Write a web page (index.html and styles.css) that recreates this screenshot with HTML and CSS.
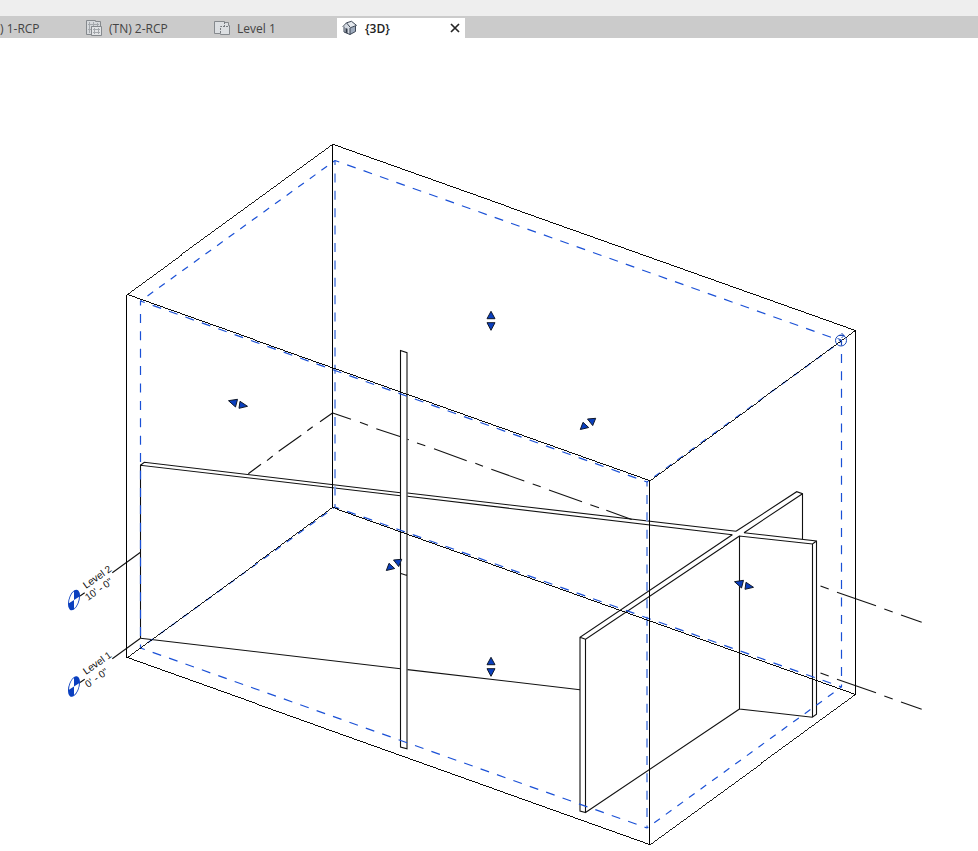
FILE: index.html
```html
<!DOCTYPE html>
<html lang="en">
<head>
<meta charset="utf-8">
<title>{3D}</title>
<link rel="stylesheet" href="styles.css">
</head>
<body>
<div class="ribbon-edge"></div>
<nav class="tabs" aria-label="Views">
  <button class="tab tab-clipped" type="button"><span>) 1-RCP</span></button>
  <button class="tab" type="button">
    <svg class="icon" viewBox="0 0 16 16" aria-hidden="true"><path d="M.5 .5h9v1h5v5h-9v8h-5z" fill="#d6d9dc" stroke="#85898d"/><path d="M3.500 2v11M7.500 2v4M11.500 3v3M2 4.500h11M2 9.500h3" stroke="#a4a8ac"/><path d="M5.500 6.500h10v9h-10z" fill="#e2e4e6" stroke="#85898d"/><path d="M8.500 8v6M12.500 8v6M7 9.500h7M7 12.500h7" stroke="#a4a8ac"/></svg>
    <span>(TN) 2-RCP</span>
  </button>
  <button class="tab" type="button">
    <svg class="icon" viewBox="0 0 16 16" aria-hidden="true"><path d="M.5 1.500h10v1h4v3h1v9h-9v-1h-6z" fill="#dcdfe2" stroke="#85898d"/><path d="M6.500 13V6.500h9M10.500 2v4" fill="none" stroke="#777b80" stroke-dasharray="2 1"/></svg>
    <span>Level 1</span>
  </button>
  <div class="tab tab-active">
    <button class="tab-name" type="button">
      <svg class="icon" viewBox="0 0 16 16" aria-hidden="true"><path d="M2 6.500L4.500 3.500 8 8v6.500L2 12z" fill="#d3d9e2"/><path d="M8 8v6.500l5.500-3V6z" fill="#9eabbd"/><path d="M4.500 2.800L9.500 1.300 14.500 5.300 8.500 7.500z" fill="#e6eaef"/><path d="M.7 6.800L4.500 2.800l4 4.900 6-2.300-5-4.100-5 1.500M2 6.500V12l6 2.500 5.500-3V6M8 8v6.500" fill="none" stroke="#3d4756"/><path d="M3.500 8v4.500l2 .8V8.800z" fill="#303947"/></svg>
      <span>{3D}</span>
    </button>
    <button class="close" type="button" aria-label="Close view"><svg viewBox="0 0 10 10" aria-hidden="true"><path d="M1 1l8 8M9 1l-8 8" stroke="#262626" stroke-width="1.700"/></svg></button>
  </div>
</nav>
<main>
<svg class="canvas" viewBox="0 38 978 813" role="img" aria-label="3D view">
  <defs>
    <path id="updown" d="M491 311.300l4 7.400h-8zM487 322.700h8l-4 7.600z"/>
    <path id="sideways" d="M228.500 400.700l9-1.400-2 7.700zM240 401.300l7.500 5-8.500 2z"/>
    <path id="depth" d="M580.300 429.500l2.700-7.200 5.700 5.200zM587.500 419l8.200-.7-3 7.300z"/>
    <g id="levelhead">
      <ellipse rx="5.500" ry="9" fill="#fff" stroke="#0a3fbf"/>
      <path d="M0 0V-9A5.500 9 0 0 1 5.500 0zM0 0V9A5.500 9 0 0 1 -5.500 0z" fill="#0a3fbf"/>
    </g>
  </defs>

  <!-- level lines -->
  <g class="model">
    <path d="M332.500 413l-12.500 8.700M312.700 426.700l-5.400 4M301.300 435.300l-22.600 16M272.700 456l-5.700 4.700M261 464.300L248.300 473.700"/>
    <path d="M332.700 413l18.300 6.300M360 422.300l8 3M376.300 428.700l24.400 8M407.500 439.300l1.300.4M417 443l8.300 2.700M434 448.700l32.700 12M475.300 463.300l7.700 3M491.300 469.300l33 11.700M532.700 484l8 2.700M549 490l33 11.700M590.300 504.700l8.700 3M606.300 510.300l25.400 9.300"/>
    <path id="levelend" d="M820.500 673l8.200 3M837 679.300l39 13.400M884.300 696l8.400 3M901 702l20.700 7.300"/>
    <use href="#levelend" y="-87"/>
    <path d="M80 596l4.700-3.300M112.300 572.700l28.200-20.400M80 682.500l4.700-3.300M112.300 658.700l28.200-20.400"/>
  </g>

  <!-- walls -->
  <g class="model">
    <path d="M140.500 638.300V465.300L400.500 495.700M140.500 465.300l3.800-3L400.500 492.700M407.500 493L736 531.300M407.500 496.300L732.300 534.700"/>
    <path d="M140.500 638.300L400.500 668.700M407.500 669.600L580 689.700"/>
    <path d="M400.500 747V350.500l6.500 2.200V748.700zM401 573.500l6 2"/>
    <path d="M736 531.300L796.700 491.700l5.800 2V539.500M744 532.700L802.500 493.700M744 532.700L816.500 541V714.300l-4.200 3L739.500 709V536L812.500 544l4-3M812.500 544V717"/>
    <path d="M732.300 534.700L580 637.300V811l5.500 1.500V639.300L739.500 536M580 637.300l5.500 2M585.500 812.500L739.500 709"/>
  </g>

  <!-- crop region -->
  <g class="crop">
    <path d="M335 160.500V507M647 482V828" class="wide"/>
    <path d="M140.500 301V648M841.500 341V687"/>
    <path d="M335 160.500L841.500 341M140.500 301L647 482M335 507L841.500 687M140.500 648L647 828"/>
    <path class="short" d="M335 160.500L140.500 301M841.500 341L647 482M335 507L140.500 648M841.500 687L647 828"/>
  </g>

  <!-- section box -->
  <g class="box">
    <path d="M126.500 294.500V657.500M332.500 144.500V507.500M649.500 480.500V844.500M855.500 330.500V694.500"/>
    <path class="long" d="M332.500 144.500L855.500 330.500M126.500 294.500L649.500 480.500M332.500 507.500L855.500 694.500M126.500 657.500L649.500 844.500"/>
    <path class="steep" d="M126.500 294.500L332.500 144.500M649.500 480.500L855.500 330.500M126.500 657.500L332.500 507.500M649.500 844.500L855.500 694.500"/>
  </g>

  <g class="handles">
    <use href="#updown"/><use href="#updown" y="346"/>
    <use href="#sideways"/><use href="#sideways" x="506" y="181"/>
    <use href="#depth"/><use href="#depth" x="-194" y="141"/>
  </g>
  <g class="rotate"><circle cx="841" cy="340.500" r="5.500"/><path d="M841.500 345v-5l-4-1.500M839 335.500h5M841.500 333l2.500 2.500-2.500 2.500"/></g>

  <!-- level tags lie in the plane of the section box -->
  <use href="#levelhead" transform="translate(74 600) skewY(-33)"/>
  <use href="#levelhead" transform="translate(74 686.500) skewY(-33)"/>
  <g class="leveltext">
    <text transform="translate(86 589) rotate(-35)">Level 2</text>
    <text transform="translate(88 601) rotate(-35)">10' - 0"</text>
    <text transform="translate(86 675) rotate(-35)">Level 1</text>
    <text transform="translate(88 688) rotate(-35)">0' - 0"</text>
  </g>
</svg>
</main>
</body>
</html>
```
FILE: styles.css
```css
* { box-sizing: border-box; }

body {
  margin: 0;
  background: #fff;
  font-family: "Open Sans", "Noto Sans", sans-serif;
}

.ribbon-edge {
  height: 16px;
  background: #eeeeee;
}

.tabs {
  display: flex;
  align-items: flex-end;
  height: 22px;
  padding-top: 2px;
  background: #cbcbcb;
  overflow: hidden;
}

button {
  border: 0;
  padding: 0;
  background: none;
  font: inherit;
  color: inherit;
}

.tab {
  display: flex;
  flex: none;
  align-items: center;
  gap: 7px;
  width: 128px;
  height: 20px;
  padding-left: 5px;
  font-size: 12px;
  line-height: 20px;
  color: #444;
}

.tab span {
  padding-top: 2px;
}

.tab-clipped {
  width: 81px;
  padding-left: 0;
}

.tab-active {
  justify-content: space-between;
  padding-right: 5px;
  background: #fff;
  color: #222;
  font-weight: 600;
}

.tab-name {
  display: flex;
  align-items: center;
  gap: 7px;
}

.icon {
  width: 16px;
  height: 16px;
  flex: none;
  fill: none;
}

.close svg {
  display: block;
  width: 10px;
  height: 10px;
}

.canvas {
  display: block;
  width: 100%;
  height: auto;
}

.model {
  fill: none;
  stroke: #111;
  stroke-width: 1.1;
}

.box {
  fill: none;
  stroke: #000;
  shape-rendering: crispEdges;
}

.box .steep { stroke-width: 0.9; }

.box .long { stroke-width: 0.96; }

.crop {
  fill: none;
  stroke: #1a50d6;
  stroke-width: 1.2;
  stroke-dasharray: 9 8.4;
  stroke-dashoffset: 4.5;
}

.crop .wide {
  stroke: #809fe6;
  stroke-width: 2;
}

.crop .short {
  stroke-dasharray: 7 7.3;
}

.handles {
  fill: #0a3fbf;
  stroke: #101828;
}

.rotate {
  fill: none;
  stroke: #1747b8;
}

.leveltext {
  font-family: "Liberation Sans", sans-serif;
  font-size: 10px;
  fill: #111;
}
```
